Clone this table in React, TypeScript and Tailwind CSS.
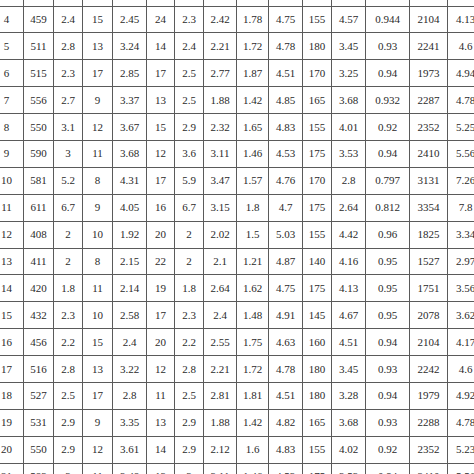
const rows: string[][] = [
  ['4', '459', '2.4', '15', '2.45', '24', '2.3', '2.42', '1.78', '4.75', '155', '4.57', '0.944', '2104', '4.13'],
  ['5', '511', '2.8', '13', '3.24', '14', '2.4', '2.21', '1.72', '4.78', '180', '3.45', '0.93', '2241', '4.6'],
  ['6', '515', '2.3', '17', '2.85', '17', '2.5', '2.77', '1.87', '4.51', '170', '3.25', '0.94', '1973', '4.94'],
  ['7', '556', '2.7', '9', '3.37', '13', '2.5', '1.88', '1.42', '4.85', '165', '3.68', '0.932', '2287', '4.78'],
  ['8', '550', '3.1', '12', '3.67', '15', '2.9', '2.32', '1.65', '4.83', '155', '4.01', '0.92', '2352', '5.25'],
  ['9', '590', '3', '11', '3.68', '12', '3.6', '3.11', '1.46', '4.53', '175', '3.53', '0.94', '2410', '5.56'],
  ['10', '581', '5.2', '8', '4.31', '17', '5.9', '3.47', '1.57', '4.76', '170', '2.8', '0.797', '3131', '7.26'],
  ['11', '611', '6.7', '9', '4.05', '16', '6.7', '3.15', '1.8', '4.7', '175', '2.64', '0.812', '3354', '7.8'],
  ['12', '408', '2', '10', '1.92', '20', '2', '2.02', '1.5', '5.03', '155', '4.42', '0.96', '1825', '3.34'],
  ['13', '411', '2', '8', '2.15', '22', '2', '2.1', '1.21', '4.87', '140', '4.16', '0.95', '1527', '2.97'],
  ['14', '420', '1.8', '11', '2.14', '19', '1.8', '2.64', '1.62', '4.75', '175', '4.13', '0.95', '1751', '3.56'],
  ['15', '432', '2.3', '10', '2.58', '17', '2.3', '2.4', '1.48', '4.91', '145', '4.67', '0.95', '2078', '3.62'],
  ['16', '456', '2.2', '15', '2.4', '20', '2.2', '2.55', '1.75', '4.63', '160', '4.51', '0.94', '2104', '4.17'],
  ['17', '516', '2.8', '13', '3.22', '12', '2.8', '2.21', '1.72', '4.78', '180', '3.45', '0.93', '2242', '4.6'],
  ['18', '527', '2.5', '17', '2.8', '11', '2.5', '2.81', '1.81', '4.51', '180', '3.28', '0.94', '1979', '4.92'],
  ['19', '531', '2.9', '9', '3.35', '13', '2.9', '1.88', '1.42', '4.82', '165', '3.68', '0.93', '2288', '4.78'],
  ['20', '550', '2.9', '12', '3.61', '14', '2.9', '2.12', '1.6', '4.83', '155', '4.02', '0.92', '2352', '5.23'],
  ['21', '583', '3', '11', '3.48', '13', '3', '3.11', '1.46', '4.53', '175', '3.53', '0.94', '2410', '5.56'],
];

// column widths: 34 30 29 30 34 28 29 33 32 34 29 34 44 38 36
const cols = 'grid grid-cols-[34px_30px_29px_30px_34px_28px_29px_33px_32px_34px_29px_34px_44px_38px_36px]';

const App = () => {
  return (
    <div className="w-[474px] h-[474px] overflow-hidden bg-white">
      <div
        className="ml-[-10px] w-[494px] flex flex-col text-[11px] leading-none text-[#2a2a2a]"
        style={{ fontFamily: '"Liberation Serif", "Times New Roman", serif' }}
      >
        <div className={`${cols} h-[6.5px] shrink-0 border-b border-[#5a5a5a]`}>
          {rows[0].map((_, i) => (
            <div key={i} className="border-r border-[#5a5a5a]" />
          ))}
        </div>
        {rows.map((row) => (
          <div key={row[0]} className={`${cols} h-[26.9px] shrink-0 border-b border-[#5a5a5a]`}>
            {row.map((cell, i) => (
              <div key={i} className="border-r border-[#5a5a5a] flex items-center justify-center whitespace-nowrap">
                {cell}
              </div>
            ))}
          </div>
        ))}
      </div>
    </div>
  );
};

export default App;
